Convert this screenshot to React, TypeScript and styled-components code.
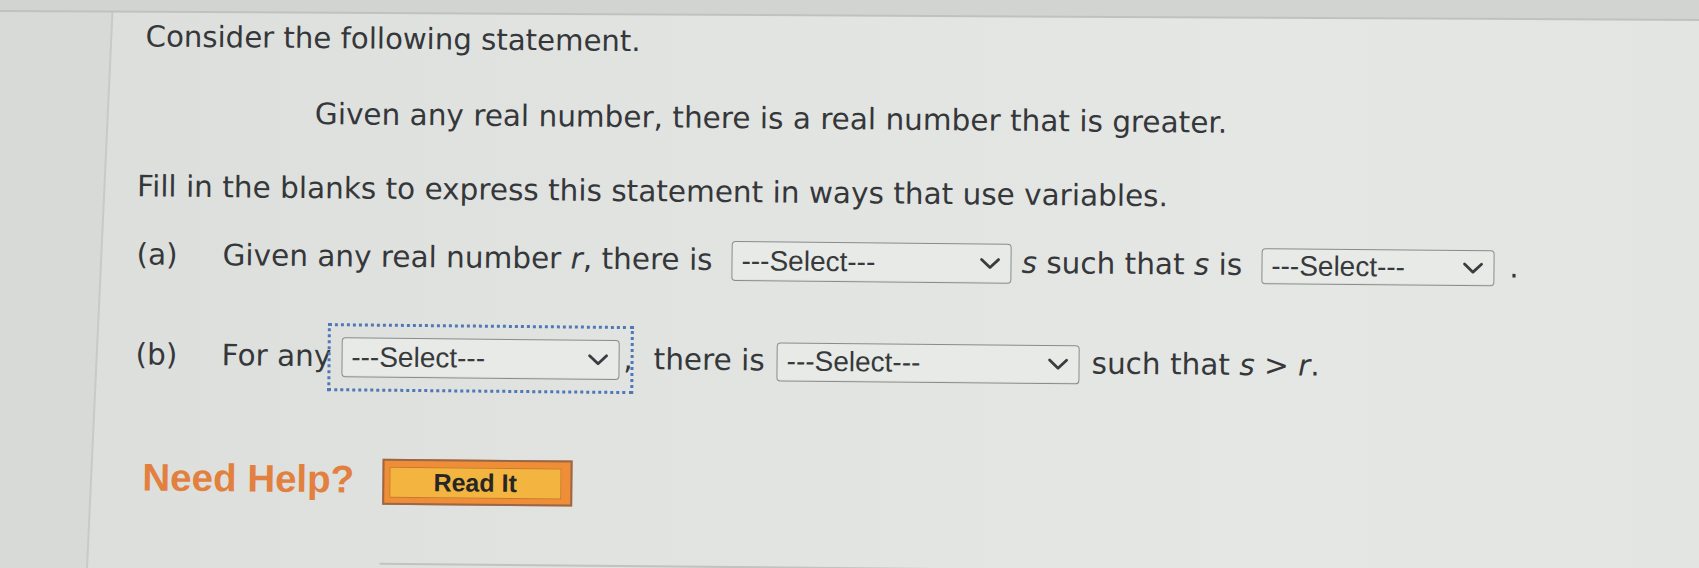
import React from "react";
import styled, { createGlobalStyle } from "styled-components";

const GlobalStyle = createGlobalStyle`
  html, body { margin: 0; padding: 0; }
  body { background: #e1e3e0; overflow: hidden; }
`;

const Page = styled.div`
  display: grid;
  grid-template-columns: 114px 1fr;
  grid-template-rows: 568px;
  width: 1699px;
  height: 568px;
  overflow: hidden;
  background: linear-gradient(90deg, #dcdedb 0%, #e1e3e0 35%, #e5e7e4 75%, #e3e5e2 100%);
`;

const Gutter = styled.div`
  grid-area: 1 / 1 / 2 / 2;
  position: relative;
  background: #c8cac7;
  clip-path: polygon(0 0, 114px 0, 88px 100%, 0 100%);
  &::before {
    content: "";
    position: absolute;
    inset: 0;
    background: #d8dad7;
    clip-path: polygon(0 0, 112px 0, 86px 100%, 0 100%);
  }
`;

const TopBar = styled.div`
  grid-area: 1 / 1 / 2 / 3;
  align-self: start;
  position: relative;
  height: 21px;
  background: #c0c2bf;
  clip-path: polygon(0 0, 100% 0, 100% 21px, 0 12px);
  &::before {
    content: "";
    position: absolute;
    inset: 0;
    background: #d2d4d1;
    clip-path: polygon(0 0, 100% 0, 100% 19px, 0 10px);
  }
`;

const Content = styled.main`
  grid-area: 1 / 2 / 2 / 3;
  display: flex;
  flex-direction: column;
  padding: 17px 0 0 25px;
  transform: rotate(0.55deg);
  transform-origin: -114px 0;
  font-family: "DejaVu Sans", Verdana, sans-serif;
  font-size: 29.5px;
  line-height: 36px;
  color: #35373a;
`;

const Intro = styled.p`
  margin: 0 0 0 7px;
  font-size: 29.2px;
`;

const Statement = styled.p`
  margin: 40px 0 0 177px;
`;

const Instruction = styled.p`
  margin: 38px 0 0 0;
`;

const PartRow = styled.div<{ $mt: number }>`
  display: flex;
  align-items: baseline;
  margin-top: ${(p) => p.$mt}px;
  white-space: nowrap;
`;

const PartLabel = styled.span`
  flex: none;
  width: 86px;
`;

const Text = styled.span<{ $ml?: number }>`
  flex: none;
  margin-left: ${(p) => p.$ml ?? 0}px;
`;

const Var = styled.i`
  font-style: italic;
`;

const SelectBox = styled.div<{ $w: number; $h: number; $ml?: number }>`
  flex: none;
  box-sizing: border-box;
  display: inline-flex;
  align-items: center;
  justify-content: space-between;
  width: ${(p) => p.$w}px;
  height: ${(p) => p.$h}px;
  margin-left: ${(p) => p.$ml ?? 0}px;
  padding: 0 9px 0 9px;
  border: 1.5px solid #8a8c8b;
  border-radius: 4px;
  background: #e8eae7;
  box-shadow: inset 0 -1px 0 rgba(0, 0, 0, 0.04);
  font-family: "Liberation Sans", Arial, sans-serif;
  font-size: 28px;
  line-height: 32px;
  color: #37393b;
`;

const Focus = styled.span<{ $ml?: number }>`
  flex: none;
  display: inline-flex;
  margin-left: ${(p) => p.$ml ?? 0}px;
  outline: 3px dotted #4f78b8;
  outline-offset: 11px;
`;

const Chevron = () => (
  <svg width="23" height="14" viewBox="0 0 23 14" aria-hidden="true">
    <path
      d="M3 3 L11.5 11 L20 3"
      fill="none"
      stroke="#3a3d40"
      strokeWidth="2.8"
      strokeLinecap="round"
      strokeLinejoin="round"
    />
  </svg>
);

const Select = ({ w, h, ml }: { w: number; h: number; ml?: number }) => (
  <SelectBox $w={w} $h={h} $ml={ml} role="combobox">
    <span>---Select---</span>
    <Chevron />
  </SelectBox>
);

const HelpRow = styled.div`
  display: flex;
  align-items: center;
  margin: 81px 0 0 8px;
`;

const HelpTitle = styled.span`
  font-family: "Liberation Sans", Arial, sans-serif;
  font-weight: 700;
  font-size: 38.5px;
  line-height: 42px;
  color: #e2803f;
  margin-bottom: 4px;
`;

const ReadButton = styled.button`
  box-sizing: border-box;
  display: flex;
  width: 190px;
  height: 46px;
  margin-left: 28px;
  padding: 6px 9px 5px 5px;
  border: 2px solid #98674c;
  background: #ef8e37;
  cursor: pointer;
`;

const ReadInner = styled.span`
  flex: 1;
  display: flex;
  align-items: center;
  justify-content: center;
  border: 1px solid #c9772f;
  background: #f4b540;
  font-family: "Liberation Sans", Arial, sans-serif;
  font-weight: 700;
  font-size: 25px;
  color: #262626;
`;

const NextBoxEdge = styled.div`
  margin: 58px 0 0 246px;
  width: 720px;
  border-top: 2px solid #c1c3c0;
`;

export default function App() {
  return (
    <>
      <GlobalStyle />
      <Page>
        <Gutter />
        <TopBar />
        <Content>
          <Intro>Consider the following statement.</Intro>
          <Statement>Given any real number, there is a real number that is greater.</Statement>
          <Instruction>Fill in the blanks to express this statement in ways that use variables.</Instruction>
          <PartRow $mt={31}>
            <PartLabel>(a)</PartLabel>
            <Text>
              Given any real number <Var>r</Var>, there is
            </Text>
            <Select w={280} h={40} ml={19} />
            <Text $ml={10}>
              <Var>s</Var> such that <Var>s</Var> is
            </Text>
            <Select w={233} h={36} ml={19} />
            <Text $ml={15}>.</Text>
          </PartRow>
          <PartRow $mt={60}>
            <PartLabel>(b)</PartLabel>
            <Text>For any</Text>
            <Focus $ml={10}>
              <Select w={278} h={40} />
            </Focus>
            <Text $ml={4}>,</Text>
            <Text $ml={21}>there is</Text>
            <Select w={303} h={39} ml={12} />
            <Text $ml={12}>
              such that <Var>s</Var> &gt; <Var>r</Var>.
            </Text>
          </PartRow>
          <HelpRow>
            <HelpTitle>Need Help?</HelpTitle>
            <ReadButton type="button">
              <ReadInner>Read It</ReadInner>
            </ReadButton>
          </HelpRow>
          <NextBoxEdge />
        </Content>
      </Page>
    </>
  );
}
